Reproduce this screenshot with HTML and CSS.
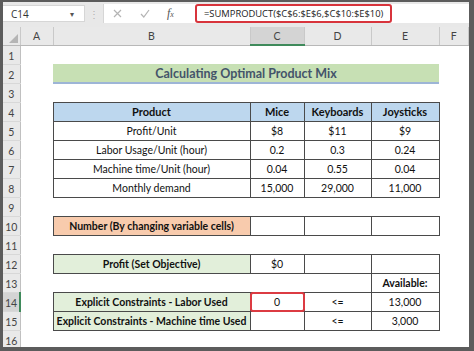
FILE: index.html
```html
<!DOCTYPE html>
<html lang="en">
<head>
  <meta charset="UTF-8" />
  <meta name="viewport" content="width=device-width, initial-scale=1.0"/>
  <title>Calculating Optimal Product Mix</title>
  <link rel="stylesheet" href="styles.css">
</head>
<body>

  <div class="window">

    <!-- Formula bar -->
    <div class="formula-bar">
      <div class="name-box">
        <span>C14</span>
        <span class="arrow">▾</span>
      </div>
      <span class="grip">⋮</span>
      <div class="formula-area">
        <span class="fbtn">
          <svg width="9" height="9" viewBox="0 0 9 9"><path d="M1 1L8 8M8 1L1 8" stroke="#b4b4b4" stroke-width="1.2" fill="none"/></svg>
        </span>
        <span class="fbtn">
          <svg width="10" height="9" viewBox="0 0 10 9"><path d="M1 5L3.8 8L9 1" stroke="#b4b4b4" stroke-width="1.2" fill="none"/></svg>
        </span>
        <span class="fx">f<sub>x</sub></span>
        <div class="formula">=SUMPRODUCT($C$6:$E$6,$C$10:$E$10)</div>
      </div>
    </div>

    <!-- Sheet -->
    <table class="sheet">
      <colgroup>
        <col style="width:17px">
        <col style="width:33px">
        <col style="width:197px">
        <col style="width:54px">
        <col style="width:67px">
        <col style="width:68px">
        <col>
      </colgroup>
      <tr class="col-heads">
        <th class="corner"><span class="tri"></span></th>
        <th>A</th><th>B</th><th class="active">C</th><th>D</th><th>E</th><th>F</th>
      </tr>
      <tr><th class="rh">1</th><td></td><td></td><td></td><td></td><td></td><td></td></tr>
      <tr><th class="rh">2</th><td></td><td class="title" colspan="4">Calculating Optimal Product Mix</td><td></td></tr>
      <tr><th class="rh">3</th><td></td><td></td><td></td><td></td><td></td><td></td></tr>
      <tr><th class="rh">4</th><td></td>
        <td class="box head">Product</td><td class="box head">Mice</td><td class="box head">Keyboards</td><td class="box head">Joysticks</td><td></td></tr>
      <tr><th class="rh">5</th><td></td>
        <td class="box">Profit/Unit</td><td class="box">$8</td><td class="box">$11</td><td class="box">$9</td><td></td></tr>
      <tr><th class="rh">6</th><td></td>
        <td class="box">Labor Usage/Unit (hour)</td><td class="box">0.2</td><td class="box">0.3</td><td class="box">0.24</td><td></td></tr>
      <tr><th class="rh">7</th><td></td>
        <td class="box">Machine time/Unit (hour)</td><td class="box">0.04</td><td class="box">0.55</td><td class="box">0.04</td><td></td></tr>
      <tr><th class="rh">8</th><td></td>
        <td class="box">Monthly demand</td><td class="box">15,000</td><td class="box">29,000</td><td class="box">11,000</td><td></td></tr>
      <tr><th class="rh">9</th><td></td><td></td><td></td><td></td><td></td><td></td></tr>
      <tr><th class="rh">10</th><td></td>
        <td class="box label orange">Number (By changing variable cells)</td><td class="box"></td><td class="box"></td><td class="box"></td><td></td></tr>
      <tr><th class="rh">11</th><td></td><td></td><td></td><td></td><td></td><td></td></tr>
      <tr><th class="rh">12</th><td></td>
        <td class="box label green">Profit (Set Objective)</td><td class="box">$0</td><td class="box"></td><td class="box"></td><td></td></tr>
      <tr><th class="rh">13</th><td></td><td></td><td></td><td></td>
        <td class="box label">Available:</td><td></td></tr>
      <tr><th class="rh active">14</th><td></td>
        <td class="box label green">Explicit Constraints - Labor Used</td><td class="box sel">0</td><td class="box">&lt;=</td><td class="box">13,000</td><td></td></tr>
      <tr><th class="rh">15</th><td></td>
        <td class="box label green">Explicit Constraints - Machine time Used</td><td class="box"></td><td class="box">&lt;=</td><td class="box">3,000</td><td></td></tr>
      <tr><th class="rh">16</th><td></td><td></td><td></td><td></td><td></td><td></td></tr>
    </table>

  </div>

</body>
</html>
```

FILE: styles.css
```css
body {
  margin: 0;
  background: #5c5c5c;
  font-family: 'Lato', 'Liberation Sans', sans-serif;
  height: 351px;
  overflow: hidden;
}
.window {
  margin: 2px 5px 0 3px;
  height: 345px;
  background: #fff;
  overflow: hidden;
}

/* formula bar */
.formula-bar {
  display: flex;
  align-items: center;
  height: 25px;
  background: #e8e8e8;
  box-sizing: border-box;
  padding: 2px 0 4px 0;
}
.name-box {
  display: flex;
  align-items: center;
  justify-content: space-between;
  width: 82px;
  height: 17px;
  box-sizing: border-box;
  padding: 0 10px 0 8px;
  background: #fff;
  border: 1px solid #d6d6d6;
  border-left: none;
  font-family: 'Open Sans', sans-serif;
  font-size: 10px;
  color: #333;
}
.name-box .arrow {
  font-size: 8px;
  color: #555;
}
.grip {
  width: 18px;
  text-align: center;
  font-size: 10px;
  color: #b0b0b0;
}
.formula-area {
  flex: 1;
  display: flex;
  align-items: center;
  height: 19px;
  background: #fff;
  border-left: 1px solid #d6d6d6;
  padding-left: 9px;
}
.fbtn {
  display: flex;
  width: 27px;
}
.fx {
  width: 28px;
  font-family: 'Liberation Serif', serif;
  font-style: italic;
  font-size: 12px;
  color: #555;
}
.fx sub {
  font-size: 8px;
  vertical-align: 0;
}
.formula {
  width: 197px;
  height: 19px;
  box-sizing: border-box;
  border: 2px solid #d8343c;
  border-radius: 3px;
  padding-left: 7px;
  font-family: 'Open Sans', sans-serif;
  font-size: 9.4px;
  line-height: 15px;
  color: #222;
  white-space: nowrap;
}

/* sheet */
.sheet {
  width: 466px;
  table-layout: fixed;
  border-collapse: collapse;
  font-size: 10.5px;
  color: #111;
}
.sheet tr {
  height: 19px;
}
.sheet td {
  padding: 0;
  text-align: center;
  white-space: nowrap;
  overflow: visible;
}
.col-heads {
  height: 18px !important;
}
.col-heads th {
  background: #e9e9e9;
  border-right: 1px solid #c9c9c9;
  border-bottom: 1px solid #b8b8b8;
  font-weight: normal;
  color: #444;
  padding: 0;
}
.col-heads th.active {
  background: #d4d4d4;
  border-bottom: 2px solid #3f8a5b;
}
.corner {
  position: relative;
}
.tri {
  position: absolute;
  right: 2px;
  bottom: 2px;
  width: 0;
  height: 0;
  border-left: 9px solid transparent;
  border-bottom: 9px solid #b5b5b5;
}
.rh {
  background: #e9e9e9;
  border-right: 1px solid #c0c0c0;
  border-bottom: 1px solid #d8d8d8;
  font-weight: normal;
  color: #444;
  padding: 0;
  vertical-align: bottom;
  padding-bottom: 2px;
}
.rh.active {
  background: #d4d4d4;
  border-right: 2px solid #3f8a5b;
}
.title {
  background: #c7e0b4;
  border-bottom: 2px solid #9db5d6;
  color: #44546a;
  font-weight: bold;
  font-size: 12.5px;
}
.box {
  border: 1px solid #4a4a4a;
}
.head {
  background: #bdd7ee;
  font-weight: bold;
  font-size: 11px;
}
.label {
  font-weight: bold;
}
.orange {
  background: #f8cbad;
}
.green {
  background: #e2efda;
}
.sel {
  position: relative;
}
.sel::after {
  content: '';
  position: absolute;
  top: -1px;
  left: -1px;
  right: -1px;
  bottom: -1px;
  border: 2px solid #dc3b42;
  border-radius: 3px;
}
```
